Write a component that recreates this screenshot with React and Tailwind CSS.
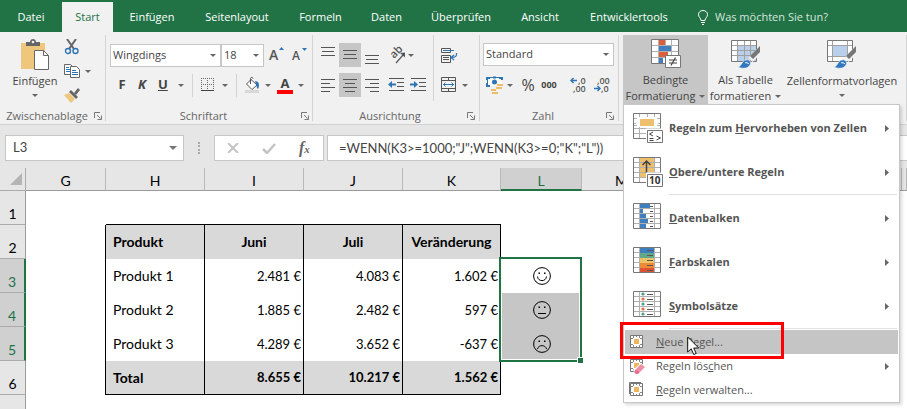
import clsx from 'clsx'

const TABS = [
  { label: 'Datei', width: 'w-[62px]' },
  { label: 'Start', width: 'w-[51px]', active: true },
  { label: 'Einfügen', width: 'w-[78px]' },
  { label: 'Seitenlayout', width: 'w-[92px]' },
  { label: 'Formeln', width: 'w-[75px]' },
  { label: 'Daten', width: 'w-[57px]' },
  { label: 'Überprüfen', width: 'w-[92px]' },
  { label: 'Ansicht', width: 'w-[66px]' },
  { label: 'Entwicklertools', width: 'w-[112px]' },
]

const COLUMNS = [
  { name: 'G', width: 'w-[80px]' },
  { name: 'H', width: 'w-[99px]' },
  { name: 'I', width: 'w-[99px]' },
  { name: 'J', width: 'w-[99px]' },
  { name: 'K', width: 'w-[98px]' },
  { name: 'L', width: 'w-[81px]' },
  { name: 'M', width: 'w-[80px]' },
  { name: '', width: 'w-[80px]' },
  { name: '', width: 'w-[80px]' },
  { name: '', width: 'w-[80px]' },
  { name: '', width: '' },
]

const ROWS = [
  { nr: 1 },
  { nr: 2, head: true, cells: ['Produkt', 'Juni', 'Juli', 'Veränderung'] },
  { nr: 3, cells: ['Produkt 1', '2.481 €', '4.083 €', '1.602 €'], mood: 'happy' },
  { nr: 4, cells: ['Produkt 2', '1.885 €', '2.482 €', '597 €'], mood: 'neutral' },
  { nr: 5, cells: ['Produkt 3', '4.289 €', '3.652 €', '-637 €'], mood: 'sad' },
  { nr: 6, total: true, cells: ['Total', '8.655 €', '10.217 €', '1.562 €'] },
  { nr: '' },
]

/* ---------- small glyphs ---------- */

function Caret({ className }) {
  return (
    <svg width="6" height="3" viewBox="0 0 6 3" className={clsx('shrink-0', className)} aria-hidden="true">
      <path d="M0 0h6L3 3z" fill="#666" />
    </svg>
  )
}

function Launcher({ label }) {
  return (
    <button type="button" aria-label={label}>
      <svg width="8" height="8" viewBox="0 0 8 8" fill="none" stroke="#777" aria-hidden="true">
        <path d="M.5 6V.5H6M3 3l3.5 3.5M7.5 3.5v4h-4" />
      </svg>
    </button>
  )
}

function Lines({ rows }) {
  return (
    <svg width="14" height="20" viewBox="0 0 14 20" stroke="#555" aria-hidden="true">
      {rows.map(([y, x1, x2]) => <path key={y} d={`M${x1} ${y + 0.5}H${x2}`} />)}
    </svg>
  )
}

function Indent({ right }) {
  return (
    <svg width="17" height="14" viewBox="0 0 17 14" fill="none" stroke="#555" aria-hidden="true">
      <path d="M1 .5h15M9 4.5h7M9 8.5h7M1 12.5h15" />
      <path d={right ? 'M0 6.5h6' : 'M2 6.5h6'} stroke="#2e75b6" strokeWidth="2" />
      <path d={right ? 'M4 3l4 3.5L4 10z' : 'M4 3L0 6.5 4 10z'} fill="#2e75b6" stroke="none" />
    </svg>
  )
}

function Smiley({ mood }) {
  const mouth = {
    happy: 'M4.5 9.5c.5 5.500 8.500 5.500 9 0',
    neutral: 'M5 12.500h8',
    sad: 'M4.500 14c1-4.500 8-4.500 9 0',
  }[mood]
  return (
    <svg width="18" height="18" viewBox="0 0 18 18" fill="none" stroke="#000" role="img" aria-label={mood}
      className="mx-auto">
      <circle cx="9" cy="9" r="8.400" />
      <path d={mouth} />
      <path d="M5.500 5.500h1.500v1.500h-1.500zM11 5.500h1.500v1.500h-1.500z" fill="#000" stroke="none" />
    </svg>
  )
}

/* ---------- ribbon icons ---------- */

function PasteIcon() {
  return (
    <svg width="30" height="32" viewBox="0 0 30 32" aria-hidden="true">
      <path d="M1 4h24v26H1z" fill="#eec67c" />
      <path d="M6 7V3h4c0-4 6-4 6 0h4v4z" fill="#666" />
      <circle cx="13" cy="3" r="1.300" fill="#f1f1f1" />
      <path d="M14.500 11.500h9l5 5v14h-14z" fill="#fff" stroke="#666" />
      <path d="M23.500 11.500v5h5" fill="none" stroke="#666" />
    </svg>
  )
}

function CutIcon() {
  return (
    <svg width="16" height="16" viewBox="0 0 16 16" fill="none" aria-hidden="true">
      <path d="M3 0l7 10M12 0L5 10" stroke="#666" strokeWidth="2" />
      <circle cx="4" cy="12" r="2.500" stroke="#2e75b6" strokeWidth="1.400" />
      <circle cx="11.500" cy="12" r="2.500" stroke="#2e75b6" strokeWidth="1.400" />
    </svg>
  )
}

function CopyIcon() {
  return (
    <svg width="16" height="14" viewBox="0 0 16 14" aria-hidden="true">
      <path d="M.5.5h6l2 2v8h-8z" fill="#fff" stroke="#666" />
      <path d="M2 3.500h3M2 5.500h4M2 7.500h4" stroke="#2e75b6" />
      <path d="M6.500 2.500h6l3 3v8h-9z" fill="#fff" stroke="#666" />
      <path d="M8 6.500h4M8 8.500h6M8 10.500h6" stroke="#2e75b6" />
    </svg>
  )
}

function PainterIcon() {
  return (
    <svg width="16" height="15" viewBox="0 0 16 15" aria-hidden="true">
      <path d="M0 7l5-2 6 6-4 4z" fill="#eec67c" />
      <path d="M5 4l2-2 7 7-2 2z" fill="#666" />
      <path d="M10 5l4-5 2 2-4 5z" fill="#666" />
    </svg>
  )
}

function FontSizeIcon({ smaller }) {
  return (
    <svg width="18" height="20" viewBox="0 0 18 20" aria-hidden="true">
      <text x="1" y="15" fontSize={smaller ? 12 : 14} fontWeight="600" fill="#555">A</text>
      <path d={smaller ? 'M11 3h5l-2.500 3z' : 'M11 5h5L13.500 2z'} fill="#2e75b6" />
    </svg>
  )
}

function BordersIcon() {
  return (
    <svg width="14" height="14" viewBox="0 0 14 14" fill="none" stroke="#666" aria-hidden="true">
      <path d="M0 .5h13M0 6.500h13M.5 0v13M6.500 0v13M12.500 0v13" strokeDasharray="1 1" />
      <path d="M0 12.500h13" stroke="#444" />
    </svg>
  )
}

function FillIcon() {
  return (
    <svg width="16" height="16" viewBox="0 0 16 16" aria-hidden="true">
      <path d="M0 13h14v3H0z" fill="#d8d8d8" />
      <path d="M6 2.500l6 5.500-5 4.500L1.500 7z" fill="#fff" stroke="#555" />
      <path d="M5.500 7V1.500c0-1.500 2.500-1.500 2.500 0" fill="none" stroke="#555" />
      <path d="M10 4c4 0 5 4 3 8-1.500-1-1.500-4-3-8z" fill="#2e75b6" />
    </svg>
  )
}

function OrientationIcon() {
  return (
    <svg width="18" height="22" viewBox="0 0 18 22" className="overflow-visible" aria-hidden="true">
      <text x="0" y="0" fontSize="11" fontWeight="600" fill="#555" transform="translate(6 15) rotate(-45)">ab</text>
      <path d="M8 19L15 11" stroke="#555" strokeWidth="1.200" />
      <path d="M17 8.500v5l-5-4.500z" fill="#555" />
    </svg>
  )
}

function WrapIcon() {
  return (
    <svg width="17" height="17" viewBox="0 0 17 17" fill="none" stroke="#555" aria-hidden="true">
      <path d="M.5 1.500h9v4h-9zM.5 8.500h9v7h-9zM2 10.500h6M2 12.500h6" />
      <path d="M2 3.500h11" stroke="#2e75b6" />
      <path d="M15.500 6c.5 3-1 4.500-5 4.500M13 8l-3 2.500 3 2.500" stroke="#2e75b6" strokeWidth="1.300" />
    </svg>
  )
}

function MergeIcon() {
  return (
    <svg width="16" height="16" viewBox="0 0 16 16" fill="none" stroke="#555" aria-hidden="true">
      <path d="M.5.5h14v14H.5zM.5 3.500h14M.5 11.500h14M7.500.5v3M7.500 11.500v3" />
      <path d="M2 7.500h11M4.500 5.500l-2 2 2 2M10.500 5.500l2 2-2 2" stroke="#2e75b6" />
    </svg>
  )
}

function CurrencyIcon() {
  return (
    <svg width="18" height="18" viewBox="0 0 18 18" aria-hidden="true">
      <path d="M1 2h15v8H1z" fill="#fff" />
      <path d="M1 4V2h3M13 2h3v2M1 7v3h3M7 1.500h3" fill="none" stroke="#2e75b6" strokeWidth="2" />
      <path d="M4 1.500h9M1.500 4v3" fill="none" stroke="#2e75b6" />
      <circle cx="8.500" cy="6" r="2.500" fill="#2e75b6" />
      <path d="M11 8h6v2h-6zM10 11h6v2h-6zM5 13h5v2H5zM6 16h6v2H6z" fill="#eebc66" />
    </svg>
  )
}

function DecimalIcon({ fewer }) {
  return (
    <svg width="20" height="20" viewBox="0 0 20 20" aria-hidden="true" fontSize="9" fontWeight="600" fill="#555">
      <text x={fewer ? 4 : 8} y="9">{fewer ? ',00' : ',0'}</text>
      <text x={fewer ? 8 : 3} y="17">{fewer ? ',0' : ',00'}</text>
      <path d={fewer ? 'M1 13.500h6M4.500 11l2.500 2.500L4.500 16' : 'M1 5.500h6M3.500 3L1 5.500 3.500 8'} fill="none"
        stroke="#2e75b6" strokeWidth="1.500" />
    </svg>
  )
}

function CondFormatIcon() {
  return (
    <svg width="30" height="30" viewBox="0 0 30 30" aria-hidden="true">
      <path d="M.5.5h27v24H.5z" fill="#fff" />
      <path d="M8 1h6v5H8zM8 13h9v5H8z" fill="#dd5e3a" />
      <path d="M8 7h12v5H8zM8 19h4v5H8z" fill="#3f7fc0" />
      <path d="M.5 6.500h27M.5 12.500h27M.5 18.500h27M7.500.5v24M20.500.5v24M14.500.5v6" stroke="#b0b0b0" fill="none" />
      <path d="M.5.5h27v24H.5z" fill="none" stroke="#777" />
      <path d="M14.500 16.500h15v12h-15z" fill="#fff" stroke="#777" />
      <path d="M18 21h8M18 24h8M24.500 18.500l-4.500 8" stroke="#444" fill="none" strokeWidth="1.200" />
    </svg>
  )
}

function BrushOver({ children }) {
  return (
    <svg width="30" height="30" viewBox="0 0 30 30" aria-hidden="true">
      <path d="M.5 1.500h25v21H.5z" fill="#fff" />
      {children}
      <path d="M.5 1.500h25v21H.5z" fill="none" stroke="#777" />
      <path d="M29.500 6v9l-8 8-4-4z" fill="#f1f1f1" />
      <path d="M29 7v6l-7 7-3-3z" fill="#777" />
      <path d="M7 28c4-1 4-7 8-7 3-1 6 2 4 5-2 4-8 4-12 2z" fill="#2f78bf" stroke="#f1f1f1" strokeWidth=".7" />
      <path d="M14 24c1-1 3 0 4 1" stroke="#fff" fill="none" />
    </svg>
  )
}

function TableIcon() {
  return (
    <BrushOver>
      <path d="M7 7h18v15H7z" fill="#b9d0ea" />
      <path d="M.5 6.500h25M.5 11.500h25M.5 16.500h25M6.500 1.500v21M13.500 1.500v21M19.500 1.500v21" stroke="#a0a0a0" fill="none" />
    </BrushOver>
  )
}

function CellStylesIcon() {
  return (
    <BrushOver>
      <path d="M.5 6.500h25M.5 17.500h25M5.500 1.500v21M20.500 1.500v21" stroke="#a0a0a0" fill="none" />
      <path d="M6 7h14v10H6z" fill="#b9d0ea" />
    </BrushOver>
  )
}

/* ---------- menu icons ---------- */

function Grid({ under, over, badge }) {
  return (
    <svg width="30" height="30" viewBox="0 0 30 30" aria-hidden="true" className="shrink-0">
      <path d="M.5.5h27v25H.5z" fill="#fff" />
      {under}
      <path d="M.5 5.500h27M.5 10.500h27M.5 15.500h27M.5 20.500h27M6.500.5v25M21.500.5v25" stroke="#b0b0b0" fill="none" />
      {over}
      <path d="M.5.5h27v25H.5z" fill="none" stroke="#777" />
      {badge && <path d="M13 15.500h17V30H13z" fill="#fff" />}
      {badge && <path d="M14.500 17.500h15v12h-15z" fill="#fff" stroke="#777" />}
      {badge}
    </svg>
  )
}

const highlightIcon = (
  <Grid over={<path d="M3 4h22v11H3z" fill="#fff" />}
    badge={
      <g fill="none" stroke="#444">
        <path d="M7 6h14v7H7z" fill="#eebf6d" stroke="none" />
        <path d="M1 5.500h3M24 5.500h3M1 12.500h3M24 12.500h3M14.500 1v3M6.500 14v2" stroke="#b0b0b0" />
        <path d="M20 19l-3.500 2 3.500 2M16.500 25.500h4M16.500 27.500h4M23.500 23l4 2-4 2" />
      </g>
    } />
)
const topIcon = (
  <Grid under={<path d="M7 1h14v19H7z" fill="#eebf6d" />}
    over={<path d="M13.500 16V4M9.500 8l4-4 4 4" fill="none" stroke="#444" strokeWidth="1.500" />}
    badge={<text x="16" y="27" fontSize="10" fill="#333">10</text>} />
)
const barsIcon = (
  <Grid
    under={<path d="M7 1h10v4H7zM7 6h3v4H7zM7 11h6v4H7zM7 16h8v4H7zM7 21h6v4H7z" fill="#3f7fc0" />}
    over={<path d="M17 3.500h3M17 8.500h3M17 13.500h3M17 18.500h3M17 23.500h3" stroke="#555" />} />
)
const scalesIcon = (
  <Grid
    over={
      <g>
        <path d="M7 1h14v5H7z" fill="#3f7fc0" />
        <path d="M7 6h14v5H7z" fill="#62a88b" />
        <path d="M7 11h14v5H7z" fill="#eec267" />
        <path d="M7 16h14v5H7z" fill="#ee8a35" />
        <path d="M7 21h14v4H7z" fill="#dc5435" />
        <path d="M14 3.500h6M14 8.500h6M14 13.500h6M14 18.500h6M14 23.500h6" stroke="#555" />
      </g>
    } />
)
const setsIcon = (
  <Grid
    over={
      <g>
        <path d="M14 3.500h6M14 8.500h6M14 13.500h6M14 18.500h6M14 23.500h6" stroke="#555" />
        {[3, 13, 23].map((y) => <circle key={y} cx="10" cy={y} r="1.600" fill="#4aa08a" />)}
        {[8, 18].map((y) => <circle key={y} cx="10" cy={y} r="1.600" fill="#e3703a" />)}
      </g>
    } />
)

function SmallGrid({ children }) {
  return (
    <svg width="16" height="16" viewBox="0 0 16 16" aria-hidden="true" className="shrink-0">
      <path d="M1.500 1.500h12v12h-12z" fill="#fff" stroke="#777" />
      <path d="M4.500 2v2M10.500 2v2M4.500 11v2M10.500 11v2M2 4.500h2M2 10.500h2M11 4.500h2M11 10.500h2M7.500 2v1M7.500 12v1" stroke="#888" />
      <path d="M5 5h5v5H5z" fill="#eeb65c" />
      {children}
    </svg>
  )
}

const newRuleIcon = <SmallGrid />
const clearRulesIcon = (
  <SmallGrid>
    <path d="M4 12l8-7 4 3v8H6z" fill="#fff" />
    <path d="M7 11l5-5 4 3-5 5z" fill="#ee8fa5" />
    <path d="M7 11l4 3-2 2H7l-2-2z" fill="#e66f8c" />
  </SmallGrid>
)
const manageRulesIcon = (
  <SmallGrid>
    <path d="M.5 12V.5H12" fill="none" stroke="#777" />
  </SmallGrid>
)

/* ---------- menu ---------- */

function Arrow() {
  return (
    <svg width="4" height="7" viewBox="0 0 4 7" className="ml-auto shrink-0" aria-hidden="true">
      <path d="M0 0l4 3.500L0 7z" fill="#666" />
    </svg>
  )
}

function BigItem({ icon, pre = '', hot, post }) {
  return (
    <button type="button" role="menuitem" className="flex h-11 w-full items-center pl-[9px] pr-[10px] text-left font-bold">
      {icon}
      <span className="ml-[6px] whitespace-nowrap">{pre}<u>{hot}</u>{post}</span>
      <Arrow />
    </button>
  )
}

function SmallItem({ icon, pre = '', hot, post, sub, active, children }) {
  return (
    <button type="button" role="menuitem"
      className={clsx('relative flex h-6 w-full items-center pl-1 pr-[9px] text-left', active && 'bg-[#c5c5c5]')}>
      {icon}
      <span className="ml-[11px] whitespace-nowrap">{pre}<u>{hot}</u>{post}</span>
      {sub && <Arrow />}
      {children}
    </button>
  )
}

function RulesMenu() {
  return (
    <div role="menu"
      className="absolute left-0 top-full z-10 w-[277px] border border-[#c6c6c6] bg-white pt-px text-[#555] shadow-[2px_2px_3px_rgba(0,0,0,0.15)]">
      <BigItem icon={highlightIcon} pre="Regeln zum " hot="H" post="ervorheben von Zellen" />
      <BigItem icon={topIcon} hot="O" post="bere/untere Regeln" />
      <div className="ml-[45px] mr-[2px] border-t border-[#e1e1e1] pt-px" />
      <BigItem icon={barsIcon} hot="D" post="atenbalken" />
      <BigItem icon={scalesIcon} hot="F" post="arbskalen" />
      <BigItem icon={setsIcon} hot="S" post="ymbolsätze" />
      <div className="ml-[45px] mr-[2px] border-t border-[#e1e1e1] pt-px" />
      <div className="px-px">
        <SmallItem icon={newRuleIcon} hot="N" post="eue Regel..." active>
          <span className="absolute -left-[5px] -top-[8px] h-[37px] w-[164px] border-[3px] border-[#fe0000]" />
          <svg width="13" height="20" viewBox="0 0 13 20" className="absolute left-[62px] top-[6px]" aria-hidden="true">
            <path d="M.7 1v15l3.500-3.200L6.700 18.500l2.500-1-2.500-5.500h5z" fill="#fff" stroke="#111" />
          </svg>
        </SmallItem>
        <SmallItem icon={clearRulesIcon} pre="Regeln lös" hot="c" post="hen" sub />
        <SmallItem icon={manageRulesIcon} hot="R" post="egeln verwalten..." />
      </div>
    </div>
  )
}

/* ---------- ribbon ---------- */

function Group({ label, launcher, className, children }) {
  return (
    <section className={clsx('mb-[3px] mt-[3px] flex shrink-0 flex-col border-r border-[#d4d4d4]', className)}>
      <div className="flex-1">{children}</div>
      {label && (
        <div className="flex h-[10px] items-center text-[#666]">
          <span className="flex-1 text-center">{label}</span>
          {launcher && <Launcher label={`${label}: Optionen`} />}
        </div>
      )}
    </section>
  )
}

function Tool({ label, pressed, caret, className, children }) {
  return (
    <button type="button" aria-label={label}
      className={clsx('flex h-6 shrink-0 items-center justify-center', pressed && 'bg-[#c6c6c6]', className)}>
      {children}
      {caret && <Caret className="ml-auto" />}
    </button>
  )
}

function Divider() {
  return <span className="h-[23px] w-px shrink-0 bg-[#d4d4d4]" />
}

function RibbonSelect({ label, value, className }) {
  return (
    <div className={clsx('relative h-[23px]', className)}>
      <select aria-label={label} defaultValue={value}
        className="h-full w-full appearance-none rounded-none border border-[#c6c6c6] bg-white pl-[2px] text-[#444]">
        <option>{value}</option>
      </select>
      <Caret className="pointer-events-none absolute right-[5px] top-[10px]" />
    </div>
  )
}

function BigButton({ icon, lines, caretBelow, active, className, ...rest }) {
  const last = lines[lines.length - 1]
  return (
    <button type="button"
      className={clsx('flex h-[69px] flex-col items-center pt-1 text-[#444]', active && 'bg-[#c6c6c6]', className)}
      {...rest}>
      <span className="flex h-[34px] items-start">{icon}</span>
      {lines.slice(0, -1).map((l) => <span key={l} className="whitespace-nowrap leading-4">{l}</span>)}
      <span className="flex items-center gap-1 whitespace-nowrap leading-4">
        {last}
        {!caretBelow && <Caret />}
      </span>
      {caretBelow && <Caret className="mt-[5px]" />}
    </button>
  )
}

function Ribbon() {
  return (
    <div className="flex h-[93px] shrink-0 border-b border-[#d2d2d2] bg-[#f1f1f1]">
      <Group label="Zwischenablage" launcher className="w-[106px] pr-[3px]">
        <div className="flex">
          <BigButton icon={<PasteIcon />} lines={['Einfügen']} caretBelow className="ml-[10px] w-[50px]" />
          <div className="flex flex-col pl-1">
            <Tool label="Ausschneiden" className="w-4"><CutIcon /></Tool>
            <Tool label="Kopieren" caret className="w-[27px]"><CopyIcon /></Tool>
            <Tool label="Format übertragen" className="w-4"><PainterIcon /></Tool>
          </div>
        </div>
      </Group>

      <Group label="Schriftart" launcher className="w-[207px] pr-[3px]">
        <div className="flex items-center pl-1 pt-2">
          <RibbonSelect label="Schriftart" value="Wingdings" className="w-[111px]" />
          <RibbonSelect label="Schriftgrad" value="18" className="w-[43px]" />
          <Tool label="Schriftgrad vergrößern" className="ml-[4px] w-[18px]"><FontSizeIcon /></Tool>
          <Tool label="Schriftgrad verkleinern" className="ml-[5px] w-[18px]"><FontSizeIcon smaller /></Tool>
        </div>
        <div className="flex items-center pl-[8px] pt-[6px] text-[13px] text-[#444]">
          <Tool label="Fett" className="w-4 font-bold">F</Tool>
          <Tool label="Kursiv" className="ml-1 w-4 font-bold italic">K</Tool>
          <Tool label="Unterstrichen" caret className="ml-1 mr-2 w-[30px] font-bold"><span className="pl-1 underline">U</span></Tool>
          <Divider />
          <Tool label="Rahmen" caret className="mx-2 w-[27px]"><BordersIcon /></Tool>
          <Divider />
          <Tool label="Füllfarbe" caret className="ml-2 w-[26px]"><FillIcon /></Tool>
          <Tool label="Schriftfarbe" caret className="ml-[6px] w-[27px]">
            <span className="w-4 border-b-4 border-[#fe0000] font-bold leading-[14px]">A</span>
          </Tool>
        </div>
      </Group>

      <Group label="Ausrichtung" launcher className="w-[167px] pr-[4px]">
        <div className="flex">
          <div className="flex w-[121px] flex-col gap-[6px] border-r border-[#d4d4d4] pb-[4px] pl-[4px] pt-2">
            <div className="flex">
              <Tool label="Oben ausrichten" className="w-[22px]"><Lines rows={[[2, 0, 14], [6, 1, 13], [10, 0, 14]]} /></Tool>
              <Tool label="Zentriert ausrichten" pressed className="w-[22px]"><Lines rows={[[5, 0, 14], [9, 1, 13], [13, 0, 14]]} /></Tool>
              <Tool label="Unten ausrichten" className="w-[22px]"><Lines rows={[[10, 0, 14], [14, 1, 13], [18, 0, 14]]} /></Tool>
              <Tool label="Ausrichtung" caret className="ml-[5px] w-[26px]"><OrientationIcon /></Tool>
            </div>
            <div className="flex">
              <Tool label="Linksbündig" className="w-[22px]"><Lines rows={[[4, 0, 14], [8, 0, 9], [12, 0, 14], [16, 0, 9]]} /></Tool>
              <Tool label="Zentriert" pressed className="w-[22px]"><Lines rows={[[4, 0, 14], [8, 2, 12], [12, 0, 14], [16, 2, 12]]} /></Tool>
              <Tool label="Rechtsbündig" className="w-[22px]"><Lines rows={[[4, 0, 14], [8, 5, 14], [12, 0, 14], [16, 5, 14]]} /></Tool>
              <Tool label="Einzug verkleinern" className="ml-[5px] w-[17px]"><Indent /></Tool>
              <Tool label="Einzug vergrößern" className="ml-[5px] w-[17px]"><Indent right /></Tool>
            </div>
          </div>
          <div className="flex flex-col gap-[6px] pl-[7px] pt-2">
            <Tool label="Textumbruch" className="w-[17px]"><WrapIcon /></Tool>
            <Tool label="Verbinden und zentrieren" caret className="w-[27px]"><MergeIcon /></Tool>
          </div>
        </div>
      </Group>

      <Group label="Zahl" launcher className="w-[139px] pr-[4px]">
        <div className="pl-[3px] pt-2">
          <RibbonSelect label="Zahlenformat" value="Standard" className="w-[131px]" />
        </div>
        <div className="flex items-center pl-[6px] pt-[7px] text-[#444]">
          <Tool label="Buchhaltungsformat" caret className="w-[27px]"><CurrencyIcon /></Tool>
          <Tool label="Prozentformat" className="ml-[7px] w-4 text-base">%</Tool>
          <Tool label="Tausendertrennzeichen" className="ml-[5px] w-4 text-[9px] font-bold">000</Tool>
          <span className="ml-[8px]"><Divider /></span>
          <Tool label="Dezimalstelle hinzufügen" className="ml-[5px] w-5"><DecimalIcon /></Tool>
          <Tool label="Dezimalstelle löschen" className="ml-[3px] w-5"><DecimalIcon fewer /></Tool>
        </div>
      </Group>

      <Group className="min-w-[288px] flex-1">
        <div className="flex pl-1">
          <div className="relative">
            <BigButton icon={<CondFormatIcon />} lines={['Bedingte', 'Formatierung']} active className="w-[85px]"
              aria-haspopup="menu" aria-expanded="true" />
            <RulesMenu />
          </div>
          <BigButton icon={<TableIcon />} lines={['Als Tabelle', 'formatieren']} className="w-[75px]" />
          <BigButton icon={<CellStylesIcon />} lines={['Zellenformatvorlagen']} caretBelow className="w-[118px]" />
        </div>
      </Group>
    </div>
  )
}

/* ---------- formula bar ---------- */

function FormulaBar() {
  return (
    <div className="flex h-[43px] shrink-0 items-center pb-[1px] pl-[5px] pt-[4px] font-[Lato,sans-serif] text-[13px] text-[#444]">
      <div className="flex h-[26px] w-[179px] items-center border border-[#c6c6c6] bg-white pr-[6px]">
        <input aria-label="Namenfeld" defaultValue="L3" className="min-w-0 flex-1 bg-transparent pl-[7px] outline-none" />
        <button type="button" aria-label="Namen auswählen">
          <svg width="8" height="4" viewBox="0 0 8 4" aria-hidden="true"><path d="M0 0h8L4 4z" fill="#777" /></svg>
        </button>
      </div>
      <svg width="2" height="12" viewBox="0 0 2 12" className="ml-[14px] mr-[14px]" aria-hidden="true">
        <path d="M0 0h2v2H0zM0 3h2v2H0zM0 7h2v2H0zM0 10h2v2H0z" fill="#ababab" />
      </svg>
      <div className="flex h-[26px] w-[110px] items-center border border-[#c6c6c6] bg-white pl-[12px]">
        <button type="button" aria-label="Abbrechen">
          <svg width="12" height="10" viewBox="0 0 12 10" stroke="#c4c4c4" strokeWidth="2" aria-hidden="true">
            <path d="M1 0l10 10M11 0L1 10" />
          </svg>
        </button>
        <button type="button" aria-label="Eingeben" className="ml-[23px]">
          <svg width="14" height="11" viewBox="0 0 14 11" fill="none" stroke="#c4c4c4" strokeWidth="2.500" aria-hidden="true">
            <path d="M1 6l4 4L13 1" />
          </svg>
        </button>
        <button type="button" aria-label="Funktion einfügen"
          className="ml-[23px] font-['Liberation_Serif',serif] text-base font-bold italic leading-4 text-[#666]">
          f<span className="text-[11px]">x</span>
        </button>
      </div>
      <input aria-label="Bearbeitungsleiste" defaultValue='=WENN(K3>=1000;"J";WENN(K3>=0;"K";"L"))'
        className="ml-[3px] h-[26px] min-w-0 flex-1 border border-r-0 border-[#c6c6c6] bg-white pl-[11px] outline-none" />
    </div>
  )
}

/* ---------- sheet ---------- */

function DataCell({ row, index }) {
  const shaded = row.head || row.total
  return (
    <td className={clsx('border-r border-black p-0',
      shaded && 'bg-[#d9d9d9] font-bold',
      row.total && 'border-b',
      index === 0 ? 'pl-[7px] text-left' : row.head ? 'text-center' : 'pr-[2px] text-right text-[13px]')}>
      {row.cells[index]}
    </td>
  )
}

function MoodCell({ mood }) {
  return (
    <td className={clsx('relative p-0', mood !== 'happy' && 'bg-[#c6c6c6]')}>
      <Smiley mood={mood} />
      {/* selection frame over L3:L5, anchored in the first cell */}
      {mood === 'happy' && (
        <div className="absolute -left-[2px] -top-[2px] z-[1] h-[105px] w-[83px] border-2 border-[#217346] shadow-[inset_0_0_0_1px_white]">
          <span className="absolute -bottom-[3px] -right-[3px] h-[6px] w-[6px] border-l border-t border-white bg-[#217346]" />
        </div>
      )}
    </td>
  )
}

function Sheet() {
  return (
    <table className="w-full table-fixed border-separate border-spacing-0 bg-white font-[Lato,sans-serif] text-sm text-black">
      <colgroup>
        <col className="w-[26px]" />
        {COLUMNS.map((c, i) => <col key={i} className={c.width} />)}
      </colgroup>
      <thead>
        <tr className="h-[23px] bg-[#e6e6e6] leading-4">
          <td className="border-b border-r border-[#ababab] p-0">
            <svg width="12" height="12" viewBox="0 0 12 12" className="ml-[10px]" aria-hidden="true">
              <path d="M12 0v12H0z" fill="#b4b4b4" />
            </svg>
          </td>
          {COLUMNS.map((c, i) => (
            <th key={i} scope="col"
              className={clsx('border-r border-r-[#b8b8b8] p-0 pt-[4px] font-normal',
                c.name === 'L' ? 'border-b-2 border-b-[#217346] bg-[#d0d0d0] text-[#217346]' : 'border-b border-b-[#9b9b9b]')}>
              {c.name}
            </th>
          ))}
        </tr>
      </thead>
      <tbody>
        {ROWS.map((row) => (
          <tr key={row.nr} className="h-[34px]">
            <th scope="row"
              className={clsx('border-b border-b-[#ababab] p-0 align-bottom font-normal',
                row.mood ? 'border-r-2 border-r-[#217346] bg-[#d0d0d0] text-[#217346]' : 'border-r border-r-[#9b9b9b] bg-[#e6e6e6]')}>
              {row.nr}
            </th>
            <td className={clsx('p-0', row.cells && 'border-r border-black')} />
            {[0, 1, 2, 3].map((i) => (row.cells
              ? <DataCell key={i} row={row} index={i} />
              : <td key={i} className={clsx('p-0', row.nr === 1 && 'border-b border-black')} />))}
            {row.mood ? <MoodCell mood={row.mood} /> : <td className="p-0" />}
            <td colSpan={5} className="p-0" />
          </tr>
        ))}
      </tbody>
    </table>
  )
}

export default function App() {
  return (
    <div className="flex h-screen flex-col overflow-hidden bg-[#e6e6e6] font-['Open_Sans','Noto_Sans',sans-serif] text-[11px]">
      <nav className="flex h-8 shrink-0 items-end bg-[#217346] text-white">
        {TABS.map((t) => (
          <button key={t.label} type="button"
            className={clsx('h-[30px] shrink-0 whitespace-nowrap', t.width, t.active && 'bg-[#f1f1f1] text-[#217346]')}>
            {t.label}
          </button>
        ))}
        <label className="ml-[13px] flex h-[30px] items-center gap-[7px]">
          <svg width="10" height="15" viewBox="0 0 10 15" fill="none" stroke="#fff" aria-hidden="true">
            <path d="M3 10.500C3 8 .5 7.500.5 4.500c0-5.300 9-5.300 9 0C9.500 7.500 7 8 7 10.500zM3 12.500h4M4 14.500h2" />
          </svg>
          <input aria-label="Was möchten Sie tun?" placeholder="Was möchten Sie tun?"
            className="w-[150px] bg-transparent outline-none placeholder:text-[#d8e6de]" />
        </label>
      </nav>
      <Ribbon />
      <FormulaBar />
      <Sheet />
    </div>
  )
}
